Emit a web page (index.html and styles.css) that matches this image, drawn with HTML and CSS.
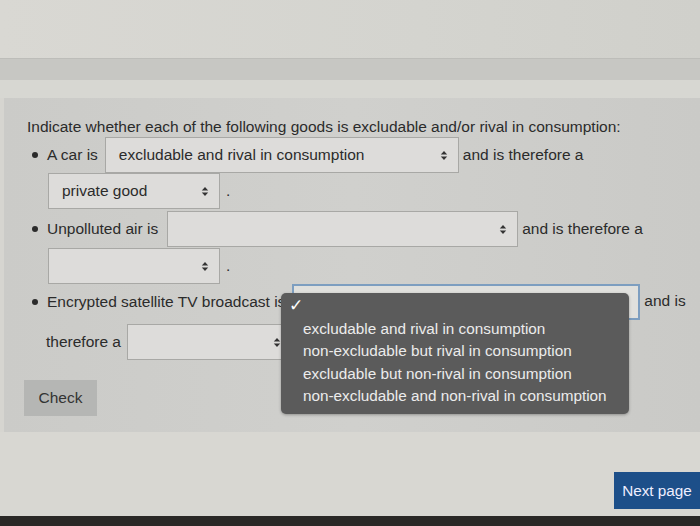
FILE: index.html
```html
<!DOCTYPE html>
<html>
<head>
<meta charset="utf-8">
<link rel="stylesheet" href="styles.css">
</head>
<body>
<div class="page">
  <div class="top"></div>
  <div class="band"></div>
  <div class="gap"></div>
  <div class="panel">
    <p class="title">Indicate whether each of the following goods is excludable and/or rival in consumption:</p>
    <ul class="items">
      <li class="row bullet">
        <span class="txt">A car is</span>
        <span class="sel w354"><span class="val">excludable and rival in consumption</span><svg class="arr" viewBox="0 0 8 12"><path d="M4 1 L7.5 5 H0.5 Z M4 11 L7.5 7 H0.5 Z"/></svg></span>
        <span class="txt">and is therefore a</span>
      </li>
      <li class="row sub">
        <span class="sel w172"><span class="val">private good</span><svg class="arr" viewBox="0 0 8 12"><path d="M4 1 L7.5 5 H0.5 Z M4 11 L7.5 7 H0.5 Z"/></svg></span>
        <span class="txt dot">.</span>
      </li>
      <li class="row bullet r3">
        <span class="txt">Unpolluted air is</span>
        <span class="sel w351"><span class="val"></span><svg class="arr" viewBox="0 0 8 12"><path d="M4 1 L7.5 5 H0.5 Z M4 11 L7.5 7 H0.5 Z"/></svg></span>
        <span class="txt">and is therefore a</span>
      </li>
      <li class="row sub r4">
        <span class="sel w172"><span class="val"></span><svg class="arr" viewBox="0 0 8 12"><path d="M4 1 L7.5 5 H0.5 Z M4 11 L7.5 7 H0.5 Z"/></svg></span>
        <span class="txt dot">.</span>
      </li>
      <li class="row bullet r5">
        <span class="txt">Encrypted satellite TV broadcast is</span>
        <span class="sel w348 focus"><span class="val"></span></span>
        <span class="txt up">and is</span>
      </li>
      <li class="row sub2 r6">
        <span class="txt">therefore a</span>
        <span class="sel w165"><span class="val"></span><svg class="arr" viewBox="0 0 8 12"><path d="M4 1 L7.5 5 H0.5 Z M4 11 L7.5 7 H0.5 Z"/></svg></span>
      </li>
    </ul>
    <button class="check">Check</button>
    <div class="menu">
      <div class="tick">&#10003;</div>
      <div class="opt first">excludable and rival in consumption</div>
      <div class="opt">non-excludable but rival in consumption</div>
      <div class="opt">excludable but non-rival in consumption</div>
      <div class="opt">non-excludable and non-rival in consumption</div>
    </div>
  </div>
  <div class="footer">
    <button class="next">Next page</button>
  </div>
  <div class="bezel"></div>
</div>
</body>
</html>
```
FILE: styles.css
```css
* { box-sizing: border-box; }
html, body { margin: 0; padding: 0; }
body {
  width: 700px;
  height: 526px;
  overflow: hidden;
  background: #d6d5d0;
  font-family: "Liberation Sans", Arial, sans-serif;
  color: #2b2b2b;
}
.page { display: flex; flex-direction: column; height: 526px; }
.top { height: 58px; background: linear-gradient(90deg, #d9d8d3, #d4d4cf 60%, #d0d0cb); }
.band { height: 22px; background: #c7c7c3; border-top: 1px solid #bdbdb9; }
.gap { height: 18px; background: #d7d7d2; }
.panel {
  position: relative;
  margin-left: 4px;
  height: 334px;
  background: linear-gradient(90deg, #cbcbc8, #d0d0cd 50%, #cacac7);
  padding: 18px 0 0 23px;
}
.title { margin: 0; font-size: 15.5px; line-height: 21px; }
.items { list-style: none; margin: 0; padding: 0; }
.row { display: flex; align-items: center; height: 36px; font-size: 15.5px; position: relative; }
.bullet { padding-left: 20px; }
.bullet::before {
  content: "";
  position: absolute;
  left: 5px; top: 15px;
  width: 6px; height: 6px; border-radius: 50%;
  background: #2b2b2b;
}
.sub { padding-left: 21px; }
.sub2 { padding-left: 19px; }
.r3 { margin-top: 2px; }
.r4 { margin-top: 1px; }
.r6 { margin-top: 4px; }
.txt { white-space: nowrap; }
.up { align-self: flex-start; padding-top: 8px; }
.dot { margin-left: 2px; }
.sel {
  position: relative;
  display: flex; align-items: center;
  height: 36px;
  margin: 0 4px;
  background: #dddcda;
  border: 1px solid #a8a8a5;
  padding-left: 13px;
  font-size: 15.5px;
  color: #2b2b2b;
  flex: none;
}
.w354 { width: 354px; margin-left: 7px; }
.w351 { width: 351px; margin-left: 9px; }
.w348 { width: 348px; margin-left: 7px; }
.w172 { width: 172px; margin-left: 0; }
.w165 { width: 165px; margin-left: 6px; }
.focus { border: 2px solid #7d9ec0; background: #e0e0dd; }
.arr { position: absolute; right: 10px; top: 12px; width: 8px; height: 11px; fill: #333; }
.check {
  margin: 20px 0 0 -3px;
  width: 73px; height: 36px;
  background: #b5b6b4;
  border: none;
  font-family: "Liberation Sans", Arial, sans-serif;
  font-size: 15.5px;
  color: #333;
  padding: 0;
}
.menu {
  position: absolute;
  left: 277px; top: 195px;
  width: 348px; height: 121px;
  background: #5b5b5b;
  border-radius: 5px;
  color: #ececec;
  font-size: 15.3px;
  padding: 0 0 0 22px;
  box-shadow: 0 1px 3px rgba(0,0,0,0.3);
}
.tick { position: absolute; left: 8px; top: 2px; font-size: 17px; color: #fff; font-weight: bold; font-family: "DejaVu Sans", sans-serif; }
.opt { line-height: 22.3px; white-space: nowrap; }
.first { margin-top: 25px; }
.footer {
  flex: 1;
  background: #d8d7d2;
  display: flex; justify-content: flex-end; align-items: flex-end;
  padding-bottom: 7px;
}
.next {
  width: 86px; height: 37px;
  background: #1d4f89;
  color: #eef;
  border: none;
  font-family: "Liberation Sans", Arial, sans-serif;
  font-size: 15.3px;
  padding: 0;
}
.bezel { height: 10px; background: #2a2826; }
```
